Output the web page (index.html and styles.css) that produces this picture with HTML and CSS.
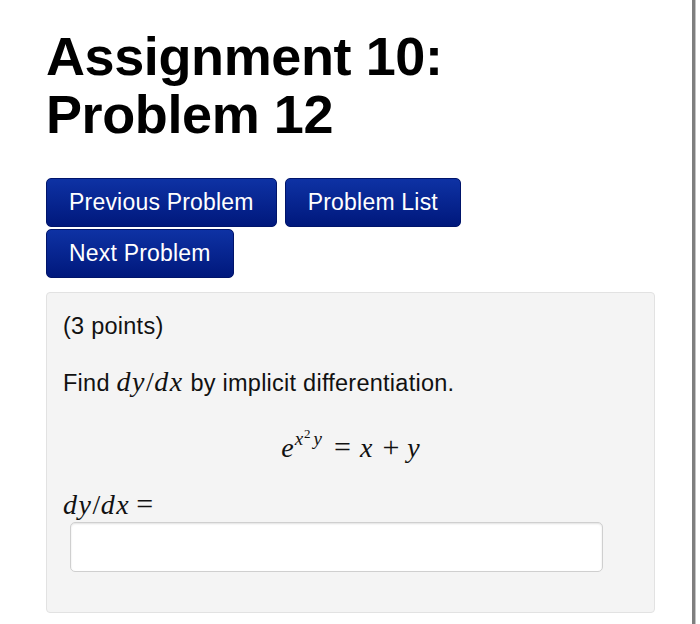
FILE: index.html
```html
<!DOCTYPE html>
<html>
<head>
<meta charset="utf-8">
<link rel="stylesheet" href="styles.css">
</head>
<body>
<div class="page">
  <main class="content">
    <h1 class="title">Assignment 10:<br>Problem 12</h1>
    <nav class="nav">
      <a class="btn">Previous Problem</a>
      <a class="btn">Problem List</a>
      <a class="btn">Next Problem</a>
    </nav>
    <section class="well">
      <p class="text first">(3 points)</p>
      <p class="text">Find <span class="mi">dy</span><span class="mi slash">/</span><span class="mi">dx</span> by implicit differentiation.</p>
      <div class="display"><span class="m"><i>e</i><span class="sup"><i>x</i><span class="sup2">2</span><i class="supy">y</i></span><span class="op eq">=</span><i>x</i><span class="op plus">+</span><i>y</i></span></div>
      <div class="label"><span class="mi">dy</span><span class="mi slash">/</span><span class="mi">dx</span><span class="op eq2">=</span></div>
      <div class="input"></div>
    </section>
  </main>
  <div class="edge"></div>
</div>
</body>
</html>
```
FILE: styles.css
```css
html, body {
  margin: 0;
  padding: 0;
  background: #ffffff;
}
body {
  font-family: "Liberation Sans", Arial, sans-serif;
  color: #111;
}
.page {
  display: flex;
  height: 624px;
  overflow: hidden;
}
.content {
  width: 609px;
  padding: 27px 0 0 46px;
}
.edge {
  margin-left: 37px;
  width: 3px;
  background: #7f7f7f;
  border-right: 1px solid #c4c4c4;
}
.title {
  margin: 0;
  font-size: 54px;
  line-height: 58px;
  font-weight: bold;
  letter-spacing: -0.4px;
  color: #000;
}
.nav {
  margin-top: 35px;
  display: flex;
  flex-wrap: wrap;
  gap: 2px 8px;
  width: 430px;
}
.btn {
  display: block;
  height: 49px;
  box-sizing: border-box;
  padding: 0 22px;
  line-height: 47px;
  font-size: 23px;
  letter-spacing: 0.2px;
  color: #fff;
  border-radius: 5px;
  background: linear-gradient(#0e32a4, #00187c);
  border: 1px solid #00146a;
}
.well {
  margin-top: 14px;
  box-sizing: border-box;
  height: 321px;
  background: #f4f4f4;
  border: 1px solid #e2e2e2;
  border-radius: 4px;
  padding: 19px 16px 0;
}
.text {
  margin: 0;
  font-size: 23.5px;
  line-height: 28px;
  letter-spacing: 0.25px;
}
.first {
  margin-bottom: 29px;
}
.mi {
  font-family: "Liberation Serif", "Times New Roman", serif;
  font-style: italic;
  font-size: 28px;
  line-height: 0;
  letter-spacing: 1.5px;
}
.slash {
  font-style: normal;
  letter-spacing: 0.5px;
}
.m {
  font-family: "Liberation Serif", "Times New Roman", serif;
  font-size: 28px;
  line-height: 0;
}
.display {
  text-align: center;
  margin-top: 37px;
  line-height: 36px;
  height: 36px;
}
.sup {
  font-size: 19px;
  line-height: 0;
  vertical-align: 12px;
  margin-left: 1px;
}
.sup2 {
  font-size: 13px;
  vertical-align: 7px;
  margin: 0 3px 0 1px;
}
.op {
  font-style: normal;
  font-size: 30px;
  line-height: 0;
}
.eq {
  margin: 0 9px 0 12px;
}
.plus {
  margin: 0 8px 0 10px;
}
.label {
  margin-top: 24px;
  line-height: 30px;
  height: 28px;
}
.eq2 {
  font-family: "Liberation Serif", "Times New Roman", serif;
  margin-left: 6px;
}
.input {
  margin: 0 0 0 7px;
  width: 533px;
  height: 50px;
  box-sizing: border-box;
  background: #fff;
  border: 1px solid #cfcfcf;
  border-radius: 5px;
  box-shadow: inset 0 1px 2px rgba(0,0,0,0.12);
}
```
